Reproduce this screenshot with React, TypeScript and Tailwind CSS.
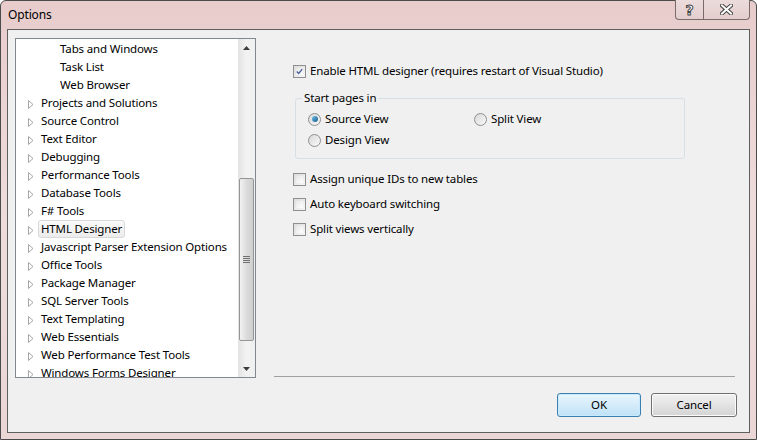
import React from 'react';

const font = { fontFamily: '"Noto Sans", "Open Sans", sans-serif' };

const treeItems: { label: string; child?: boolean; selected?: boolean }[] = [
  { label: 'Tabs and Windows', child: true },
  { label: 'Task List', child: true },
  { label: 'Web Browser', child: true },
  { label: 'Projects and Solutions' },
  { label: 'Source Control' },
  { label: 'Text Editor' },
  { label: 'Debugging' },
  { label: 'Performance Tools' },
  { label: 'Database Tools' },
  { label: 'F# Tools' },
  { label: 'HTML Designer', selected: true },
  { label: 'Javascript Parser Extension Options' },
  { label: 'Office Tools' },
  { label: 'Package Manager' },
  { label: 'SQL Server Tools' },
  { label: 'Text Templating' },
  { label: 'Web Essentials' },
  { label: 'Web Performance Test Tools' },
  { label: 'Windows Forms Designer' },
];

const txt = 'text-[11.5px] tracking-[-0.15px] text-black leading-none whitespace-nowrap';

function Expander() {
  return (
    <svg width="6" height="9" viewBox="0 0 6 9" className="shrink-0">
      <path d="M0.5 0.5 L5 4.5 L0.5 8.5 Z" fill="#fff" stroke="#a6a6a6" />
    </svg>
  );
}

function Checkbox({ checked, label }: { checked?: boolean; label: string }) {
  return (
    <div className="flex items-center h-[16px]">
      <div className="w-[13px] h-[13px] border border-[#8e8f8f] bg-gradient-to-br from-[#dcdcdc] to-[#f7f7f7] p-[2px] shrink-0">
        <div className="w-full h-full bg-gradient-to-br from-[#e6e6e6] to-[#ffffff] flex items-center justify-center">
          {checked && (
            <svg width="9" height="9" viewBox="0 0 9 9">
              <path d="M1 4.5 L3.5 7 L8 1.5" fill="none" stroke="#4a5f97" strokeWidth="1.8" />
            </svg>
          )}
        </div>
      </div>
      <span className={`ml-[4px] ${txt}`}>{label}</span>
    </div>
  );
}

function Radio({ checked, label }: { checked?: boolean; label: string }) {
  return (
    <div className="flex items-center h-[16px]">
      <div className="w-[13px] h-[13px] rounded-full border border-[#8e8f8f] bg-gradient-to-br from-[#d8d8d8] to-[#fafafa] flex items-center justify-center shrink-0">
        {checked && <div className="w-[6px] h-[6px] rounded-full bg-gradient-to-br from-[#6bc5ee] to-[#1b5a8b]" />}
      </div>
      <span className={`ml-[4px] ${txt}`}>{label}</span>
    </div>
  );
}

function ScrollBar() {
  return (
    <div className="w-[17px] h-full shrink-0 bg-gradient-to-r from-[#e3e3e3] via-[#f2f2f2] to-[#f0f0f0] flex flex-col items-center">
      <div className="h-[17px] w-full flex items-center justify-center">
        <svg width="7" height="4" viewBox="0 0 7 4">
          <path d="M0 4 L3.5 0 L7 4 Z" fill="#3c3c3c" />
        </svg>
      </div>
      <div className="h-[122px]" />
      <div className="w-[15px] h-[163px] rounded-[2px] border border-[#959595] bg-gradient-to-r from-[#f2f2f2] via-[#dcdcdc] to-[#cfcfcf] flex items-center justify-center">
        <div className="flex flex-col gap-[1px]">
          <div className="w-[7px] h-[1px] bg-[#6f6f6f]" />
          <div className="w-[7px] h-[1px] bg-[#6f6f6f]" />
          <div className="w-[7px] h-[1px] bg-[#6f6f6f]" />
          <div className="w-[7px] h-[1px] bg-[#6f6f6f]" />
        </div>
      </div>
      <div className="flex-1" />
      <div className="h-[17px] w-full flex items-center justify-center">
        <svg width="7" height="4" viewBox="0 0 7 4">
          <path d="M0 0 L3.5 4 L7 0 Z" fill="#3c3c3c" />
        </svg>
      </div>
    </div>
  );
}

export default function App() {
  return (
    <div className="w-[757px] h-[440px] bg-white" style={font}>
      <div className="w-full h-full flex flex-col rounded-t-[6px] border border-[#4b4b4b] bg-gradient-to-b from-[#e8cccc] via-[#eedcdc] to-[#ebd6d6]">
        {/* title bar */}
        <div className="h-[28px] flex items-start relative">
          <span className="ml-[7px] mt-[8px] text-[12px] tracking-[-0.15px] text-black leading-none">Options</span>
          <div className="absolute right-[6px] top-[-1px] flex">
            <div className="w-[29px] h-[20px] border border-[#7a6b6b] border-t-0 rounded-bl-[4px] bg-gradient-to-b from-[#ecdcdc] to-[#e4cdcd] flex items-center justify-center">
              <span className="text-[14px] font-bold text-white leading-none" style={{ WebkitTextStroke: '1px #444', fontFamily: '"DejaVu Sans", sans-serif' }}>?</span>
            </div>
            <div className="w-[46px] h-[20px] border border-l-0 border-[#7a6b6b] border-t-0 rounded-br-[4px] bg-gradient-to-b from-[#ecdcdc] to-[#e4cdcd] flex items-center justify-center">
              <svg width="13" height="11" viewBox="0 0 13 11">
                <path d="M2 1.5 L11 9.5 M11 1.5 L2 9.5" stroke="#444" strokeWidth="4" strokeLinecap="square" />
                <path d="M2 1.5 L11 9.5 M11 1.5 L2 9.5" stroke="#fff" strokeWidth="2" strokeLinecap="square" />
              </svg>
            </div>
          </div>
        </div>

        {/* client area */}
        <div className="flex-1 mx-[6px] mb-[6px] border border-[#5f5f5f] bg-[#f0f0f0] flex flex-col">
          <div className="flex h-[348px]">
            {/* tree */}
            <div className="ml-[7px] mt-[8px] w-[241px] h-[340px] border border-[#828790] bg-white flex">
              <div className="flex-1 overflow-hidden pt-[1px]">
                {treeItems.map((it) => (
                  <div key={it.label} className="h-[18px] flex items-center">
                    {it.child ? (
                      <div className="w-[44px] shrink-0" />
                    ) : (
                      <div className="w-[25px] shrink-0 pl-[12px] pt-[2px] flex items-center">
                        <Expander />
                      </div>
                    )}
                    <span
                      className={
                        it.selected
                          ? `${txt} px-[2px] h-[18px] flex items-center rounded-[3px] border border-[#d9d9d9] bg-gradient-to-b from-[#fafafa] to-[#ececec] -ml-[3px]`
                          : txt
                      }
                    >
                      {it.label}
                    </span>
                  </div>
                ))}
              </div>
              <ScrollBar />
            </div>

            {/* right pane */}
            <div className="flex-1 ml-[18px] mr-[14px] flex flex-col">
              <div className="flex-1 pl-[19px] pt-[33px]">
                <Checkbox checked label="Enable HTML designer (requires restart of Visual Studio)" />
                <div className="relative mt-[19px] ml-[2px] w-[390px] h-[61px] border border-[#d5dfe5] rounded-[3px]">
                  <span className={`absolute -top-[7px] left-[6px] px-[2px] bg-[#f0f0f0] ${txt}`}>
                    Start pages in
                  </span>
                  <div className="pl-[12px] pt-[12px] grid grid-cols-[166px_1fr] gap-y-[5px]">
                    <Radio checked label="Source View" />
                    <Radio label="Split View" />
                    <Radio label="Design View" />
                  </div>
                </div>
                <div className="mt-[12px] flex flex-col gap-[9px]">
                  <Checkbox label="Assign unique IDs to new tables" />
                  <Checkbox label="Auto keyboard switching" />
                  <Checkbox label="Split views vertically" />
                </div>
              </div>
              <div className="h-[1px] bg-[#a0a0a0] mb-[1px]" />
            </div>
          </div>

          {/* buttons */}
          <div className="flex justify-end gap-[10px] mr-[12px] mt-[15px]">
            <button className={`w-[84px] h-[24px] rounded-[3px] border border-[#3c7fb1] bg-gradient-to-b from-[#eaf6fd] to-[#bfe2f6] ${txt} shadow-[inset_0_0_0_1px_#c8eafc]`}>
              OK
            </button>
            <button className={`w-[86px] h-[24px] rounded-[3px] border border-[#707070] bg-gradient-to-b from-[#f2f2f2] to-[#d4d4d4] ${txt} shadow-[inset_0_0_0_1px_#fbfbfb]`}>
              Cancel
            </button>
          </div>
        </div>
      </div>
    </div>
  );
}
